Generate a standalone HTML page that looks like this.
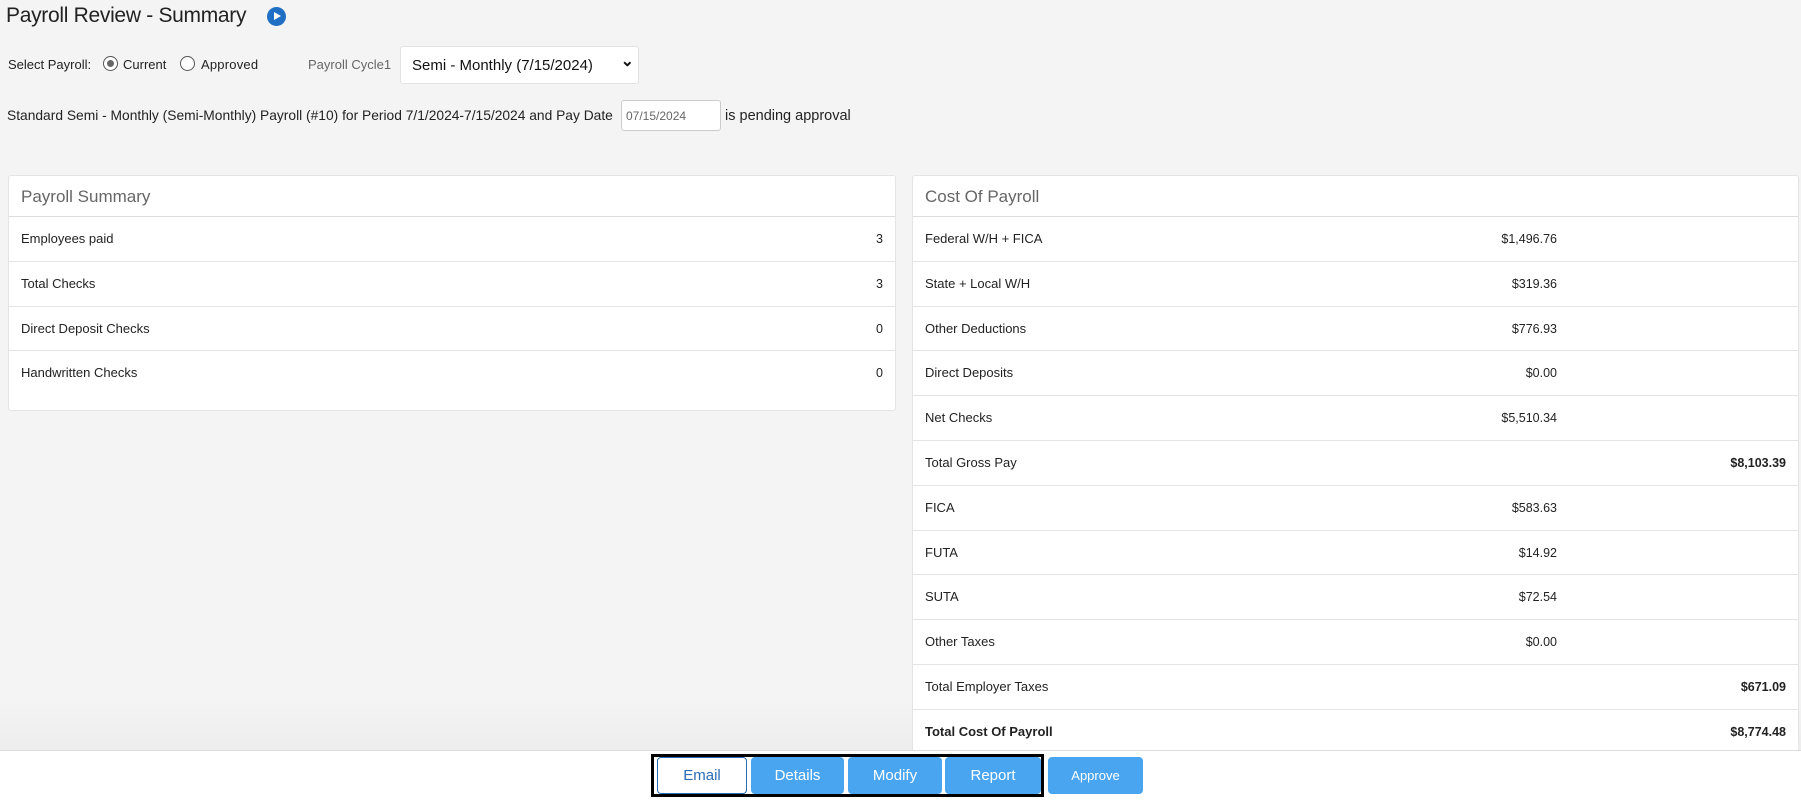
<!DOCTYPE html>
<html><head><style>
*{box-sizing:border-box;margin:0;padding:0}
body{width:1801px;height:801px;overflow:hidden;background:#f4f4f4;font-family:"Liberation Sans",sans-serif;color:#222;position:relative}
.abs{position:absolute}
.title{left:6px;top:4px;font-size:21px;color:#222;letter-spacing:-0.3px}
.play{left:267px;top:7px;width:19px;height:19px;border-radius:50%;background:#1f6fc5}
.play:after{content:"";position:absolute;left:7px;top:5px;border-left:7px solid #fff;border-top:4.5px solid transparent;border-bottom:4.5px solid transparent}
.t13{font-size:13px}
.radio{width:15px;height:15px;border:1px solid #555;border-radius:50%;background:#fff}
.radio.on:after{content:"";position:absolute;left:3px;top:3px;width:7px;height:7px;border-radius:50%;background:#666}
.select{left:400px;top:46px;width:239px;height:38px;background:#fff;border:1px solid #e2e2e2;border-radius:3px;font-size:15px;padding:10px 0 0 11px;color:#111}
.select:after{content:"⌄";position:absolute;right:4px;top:4px;font-size:16px;font-weight:bold}
.date{left:621px;top:100px;width:100px;height:31px;background:#fff;border:1px solid #ccc;border-radius:3px;font-size:12px;color:#666;padding:8px 0 0 4px}
.panel{background:#fff;border:1px solid #e4e4e4;border-radius:3px}
.hdr{height:41px;border-bottom:1px solid #ddd;font-size:17px;color:#666;padding:11px 0 0 12px}
.row{height:44.8px;border-bottom:1px solid #e4e4e4;position:relative;font-size:13px;padding:14px 0 0 12px}
.row .v{position:absolute;top:15px;font-size:12.5px}
.b{font-weight:bold}
.footer{left:0;top:750px;width:1801px;height:51px;background:#fff;border-top:1px solid #ddd}
.shade{left:0;top:700px;width:1801px;height:50px;background:linear-gradient(#f4f4f4,#ededed)}
.btn{top:757px;height:37px;border-radius:4px;background:#4aa5f0;color:#fff;font-size:15px;text-align:center;line-height:37px}
</style></head><body>
<div class="abs shade"></div>
<div class="abs title">Payroll Review - Summary</div>
<div class="abs play"></div>
<div class="abs t13" style="left:8px;top:57px">Select Payroll:</div>
<div class="abs radio on" style="left:103px;top:56px"></div>
<div class="abs t13" style="left:123px;top:57px">Current</div>
<div class="abs radio" style="left:180px;top:56px"></div>
<div class="abs t13" style="left:201px;top:57px;letter-spacing:0.2px">Approved</div>
<div class="abs t13" style="left:308px;top:57px;color:#666">Payroll Cycle1</div>
<div class="abs select">Semi - Monthly (7/15/2024)</div>
<div class="abs" style="left:7px;top:108px;font-size:13.8px">Standard Semi - Monthly (Semi-Monthly) Payroll (#10) for Period 7/1/2024-7/15/2024 and Pay Date</div>
<div class="abs date">07/15/2024</div>
<div class="abs" style="left:725px;top:108px;font-size:14.5px">is pending approval</div>

<div class="abs panel" style="left:8px;top:175px;width:888px;height:236px">
<div class="hdr">Payroll Summary</div>
<div class="row">Employees paid<span class="v" style="right:12px">3</span></div>
<div class="row">Total Checks<span class="v" style="right:12px">3</span></div>
<div class="row">Direct Deposit Checks<span class="v" style="right:12px">0</span></div>
<div class="row" style="border:none">Handwritten Checks<span class="v" style="right:12px">0</span></div>
</div>

<div class="abs panel" style="left:912px;top:175px;width:887px;height:580px;overflow:hidden">
<div class="hdr">Cost Of Payroll</div>
<div class="row">Federal W/H + FICA<span class="v" style="left:569px;width:75px;text-align:right">$1,496.76</span></div>
<div class="row">State + Local W/H<span class="v" style="left:569px;width:75px;text-align:right">$319.36</span></div>
<div class="row">Other Deductions<span class="v" style="left:569px;width:75px;text-align:right">$776.93</span></div>
<div class="row">Direct Deposits<span class="v" style="left:569px;width:75px;text-align:right">$0.00</span></div>
<div class="row">Net Checks<span class="v" style="left:569px;width:75px;text-align:right">$5,510.34</span></div>
<div class="row">Total Gross Pay<span class="v b" style="right:12px">$8,103.39</span></div>
<div class="row">FICA<span class="v" style="left:569px;width:75px;text-align:right">$583.63</span></div>
<div class="row">FUTA<span class="v" style="left:569px;width:75px;text-align:right">$14.92</span></div>
<div class="row">SUTA<span class="v" style="left:569px;width:75px;text-align:right">$72.54</span></div>
<div class="row">Other Taxes<span class="v" style="left:569px;width:75px;text-align:right">$0.00</span></div>
<div class="row">Total Employer Taxes<span class="v b" style="right:12px">$671.09</span></div>
<div class="row b">Total Cost Of Payroll<span class="v b" style="right:12px">$8,774.48</span></div>
</div>

<div class="abs footer"></div>
<div class="abs" style="left:651px;top:754px;width:393px;height:43px;border:3px solid #000"></div>
<div class="abs btn" style="left:657px;width:90px;background:#fff;border:1px solid #2a6cb5;color:#2a6cb5;line-height:35px">Email</div>
<div class="abs btn" style="left:751px;width:93px">Details</div>
<div class="abs btn" style="left:848px;width:94px">Modify</div>
<div class="abs btn" style="left:945px;width:96px">Report</div>
<div class="abs btn" style="left:1048px;width:95px;font-size:13px">Approve</div>
</body></html>
